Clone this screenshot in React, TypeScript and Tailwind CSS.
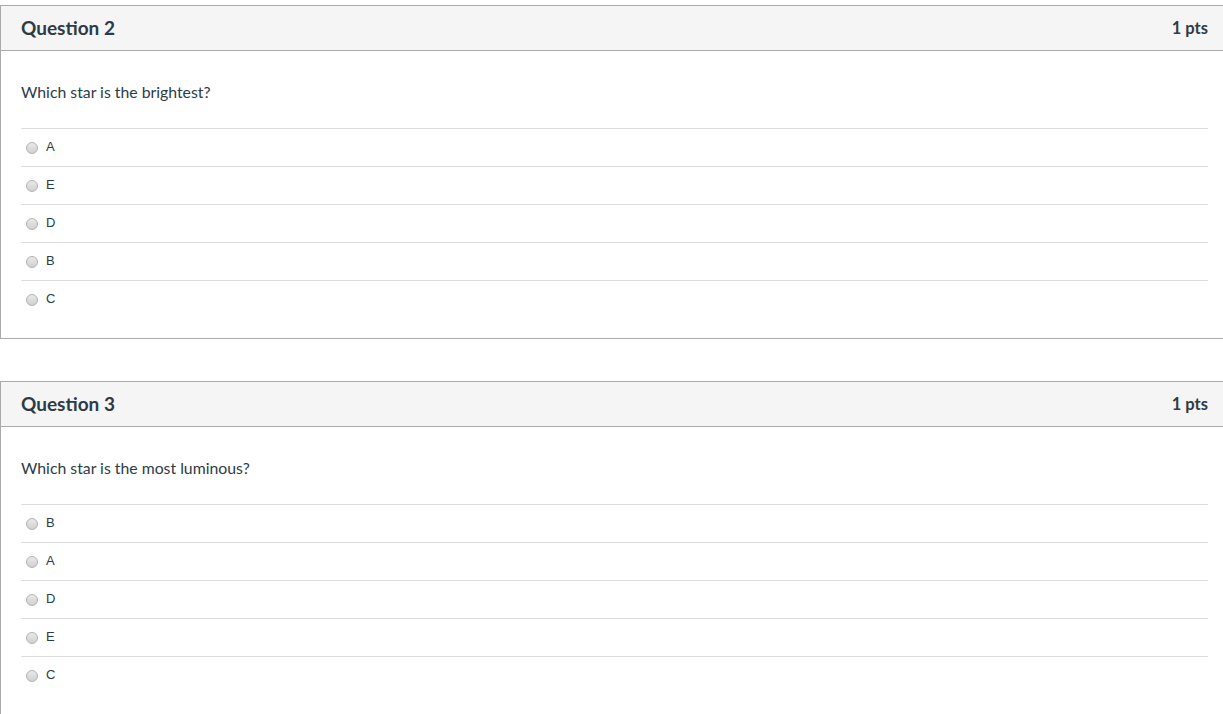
import React from "react";

type Question = {
    title: string
    points: string
    text: string
    answers: string[]
}

const questions: Question[] = [
    { title: "Question 2", points: "1 pts", text: "Which star is the brightest?", answers: ["A", "E", "D", "B", "C"] },
    { title: "Question 3", points: "1 pts", text: "Which star is the most luminous?", answers: ["B", "A", "D", "E", "C"] },
]

const Radio = () => (
    <span className="ml-[5px] w-[12px] h-[12px] rounded-full border border-[#b3b3b3] bg-gradient-to-b from-[#e9e9e9] to-[#d0d0d0] shrink-0" />
)

const QuestionCard = ({ q }: { q: Question }) => (
    <div className="w-[1229px] border border-[#aaaaaa] bg-white mb-[42px]">
        {/* header */}
        <div className="h-[45px] px-[20px] flex items-center justify-between bg-[#f5f5f5] border-b border-[#aaaaaa]">
            <h2 className="text-[19px] font-bold text-[#2d3b45]">{q.title}</h2>
            <span className="text-[16.5px] font-bold text-[#2d3b45]">{q.points}</span>
        </div>
        <div className="px-[20px] pb-[20px]">
            <p className="pt-[31px] pb-[26px] text-[15.8px] leading-[20px] text-[#2d3b45]">{q.text}</p>
            {q.answers.map((a) => (
                <div key={a} className="h-[38px] border-t border-[#dddddd] flex items-center gap-[8px]">
                    <Radio />
                    <span className="pb-[2px] text-[13px] text-[#2d3b45] font-['Liberation_Sans',sans-serif]">{a}</span>
                </div>
            ))}
        </div>
    </div>
)

const App = () => {
    return (
        <div className="w-full h-[714px] overflow-hidden bg-white pt-[5px] font-['Lato',sans-serif]">
            {questions.map((q) => (
                <QuestionCard key={q.title} q={q} />
            ))}
        </div>
    );
};

export default App;
